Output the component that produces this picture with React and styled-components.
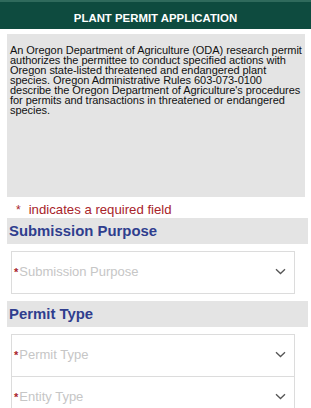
import React from "react";
import styled, { createGlobalStyle } from "styled-components";

const GlobalStyle = createGlobalStyle`
  body {
    margin: 0;
    background: #fff;
    font-family: "Liberation Sans", Arial, sans-serif;
  }
`;

const Page = styled.div`
  width: 311px;
  height: 408px;
  overflow: hidden;
`;

const Header = styled.header`
  height: 29px;
  background: #0e4b3f;
  border-top: 2px solid #2f6a5c;
  box-sizing: border-box;
  display: flex;
  align-items: center;
  justify-content: center;
  color: #fff;
  font-size: 11.4px;
  font-weight: bold;
  padding-top: 5px;
`;

const Intro = styled.div`
  margin: 5px 6px 0 7px;
  height: 163px;
  background: #e4e4e4;
  box-sizing: border-box;
  padding: 11px 0 0 3px;
  color: #111;
  font-size: 11px;
  letter-spacing: -0.05px;
  line-height: 10px;
`;

const Required = styled.div`
  display: flex;
  align-items: center;
  gap: 8px;
  margin: 4px 0 0 16px;
  color: #a8232a;
  font-size: 13.2px;
  height: 17px;
`;

const Star = styled.span`
  color: #a8232a;
  font-size: ${(p) => (p.$small ? "11px" : "12px")};
  font-weight: ${(p) => (p.$small ? "bold" : "normal")};
`;

const SectionBand = styled.div`
  margin: ${(p) => p.$top}px 3px 0 7px;
  height: 26px;
  background: #e4e4e4;
  display: flex;
  align-items: center;
  padding-left: 2px;
  color: #2f3e8e;
  font-size: 14.9px;
  font-weight: bold;
`;

const Group = styled.div`
  margin: 7px 16px 0 11px;
  border: 1px solid #dcdcdc;
  background: #fff;
`;

const Select = styled.div`
  height: 39px;
  display: flex;
  align-items: center;
  padding: 0 8px 2px 2px;
  border-top: ${(p) => (p.$first ? "none" : "1px solid #dcdcdc")};
  font-size: 13px;
  color: #c6c6c6;
`;

const Label = styled.span`
  flex: 1;
  display: flex;
  align-items: baseline;
  gap: 1px;
`;

const Chevron = () => (
  <svg width="11" height="7" viewBox="0 0 11 7">
    <path d="M1 1.2 L5.5 5.5 L10 1.2" fill="none" stroke="#555" strokeWidth="1.3" />
  </svg>
);

const Field = ({ label, first }) => (
  <Select $first={first}>
    <Label>
      <Star $small>*</Star>
      {label}
    </Label>
    <Chevron />
  </Select>
);

export default function App() {
  return (
    <Page>
      <GlobalStyle />
      <Header>PLANT PERMIT APPLICATION</Header>
      <Intro>
        An Oregon Department of Agriculture (ODA) research permit authorizes
        the permittee to conduct specified actions with Oregon state-listed
        threatened and endangered plant species. Oregon Administrative Rules
        603-073-0100 describe the Oregon Department of Agriculture's
        procedures for permits and transactions in threatened or endangered
        species.
      </Intro>
      <Required>
        <Star>*</Star>
        indicates a required field
      </Required>
      <SectionBand $top={0}>Submission Purpose</SectionBand>
      <Group>
        <Field label="Submission Purpose" first />
      </Group>
      <SectionBand $top={7}>Permit Type</SectionBand>
      <Group>
        <Field label="Permit Type" first />
        <Field label="Entity Type" />
      </Group>
    </Page>
  );
}
